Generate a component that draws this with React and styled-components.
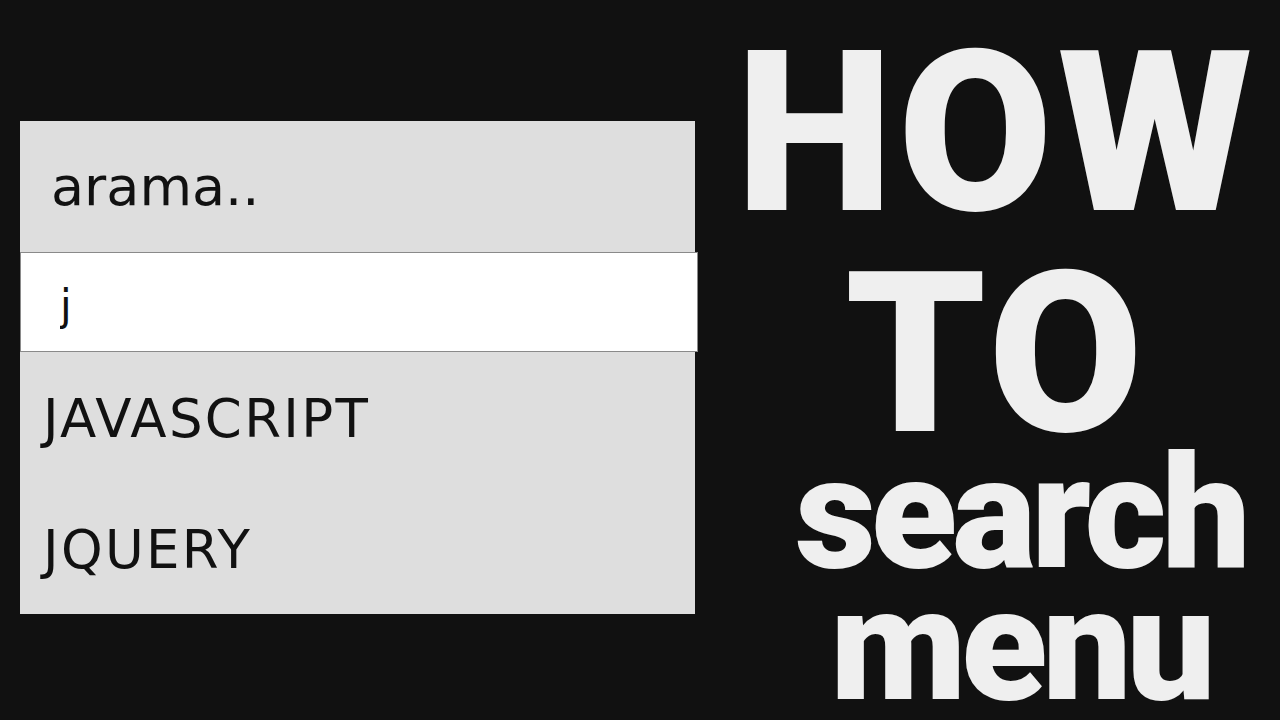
import React from 'react';
import styled, { createGlobalStyle } from 'styled-components';

const GlobalStyle = createGlobalStyle`
  html, body {
    margin: 0;
    padding: 0;
    background: #111111;
  }
`;

const Page = styled.div`
  display: flex;
  width: 1280px;
  height: 720px;
  overflow: hidden;
  background: #111111;
`;

const MenuPanel = styled.div`
  display: flex;
  flex-direction: column;
  width: 675px;
  margin: 121px 0 0 20px;
  align-self: flex-start;
  background: #dedede;
  font-family: 'DejaVu Sans', Verdana, sans-serif;
  color: #111111;
`;

const Header = styled.div`
  display: flex;
  align-items: center;
  height: 130px;
  padding-left: 31px;
  font-size: 54px;
  border-radius: 2px 2px 0 0;
`;

const SearchInput = styled.input`
  box-sizing: border-box;
  width: 678px;
  height: 100px;
  margin: 1px 0 0;
  padding: 7px 0 0 39px;
  border: 1px solid #8a8a8a;
  background: #ffffff;
  font-family: 'DejaVu Sans', Verdana, sans-serif;
  font-size: 42px;
  color: #111111;
  outline: none;
`;

const List = styled.ul`
  list-style: none;
  margin: 0;
  padding: 0;
`;

const Item = styled.li`
  display: flex;
  align-items: center;
  height: 131px;
  padding: 2px 0 0 23px;
  box-sizing: border-box;
  font-size: 53px;
  letter-spacing: 2.3px;
`;

const Title = styled.div`
  flex: 1;
  display: flex;
  flex-direction: column;
  padding-top: 23px;
  font-family: Roboto, 'Liberation Sans', sans-serif;
  font-weight: 900;
  color: #efefef;
  text-align: center;
`;

const BigLine = styled.div`
  font-size: 224px;
  line-height: 221px;
  letter-spacing: 5px;
  padding-left: 18px;
`;

const SmallLine = styled.div`
  font-size: 158px;
  line-height: 132px;
  letter-spacing: -5px;
  padding-left: 66px;
  margin-top: ${p => (p.$first ? '-18px' : '0')};
`;

const items = ['JAVASCRIPT', 'JQUERY'];

export default function App() {
  return (
    <Page>
      <GlobalStyle />
      <MenuPanel>
        <Header>arama..</Header>
        <SearchInput defaultValue="j" />
        <List>
          {items.map(name => (
            <Item key={name}>{name}</Item>
          ))}
        </List>
      </MenuPanel>
      <Title>
        <BigLine>HOW</BigLine>
        <BigLine>TO</BigLine>
        <SmallLine $first>search</SmallLine>
        <SmallLine>menu</SmallLine>
      </Title>
    </Page>
  );
}
